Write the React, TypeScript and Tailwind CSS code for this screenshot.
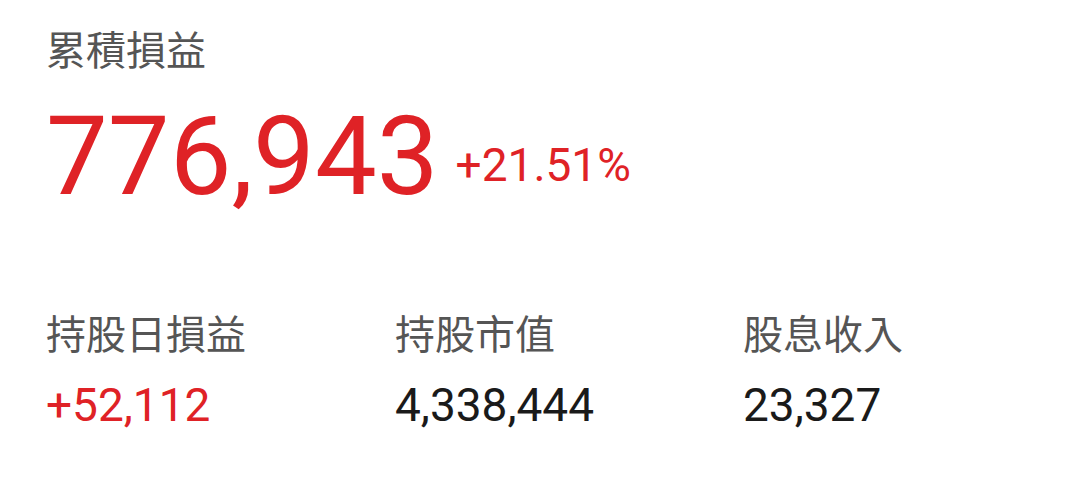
import React from "react";

const cjk = { fontFamily: 'Roboto, "Noto Sans CJK TC", sans-serif' };

export default function App() {
  return (
    <div className="w-[1080px] h-[504px] bg-white pl-[46px] pt-[24px]" style={cjk}>
      <div className="text-[40px] leading-[56px] text-[#555555]">累積損益</div>
      <div className="flex items-end mt-[22px] text-[#df2226]">
        <span className="text-[110px] leading-[110px]">776,943</span>
        <span className="text-[46px] leading-[50px] ml-[17px] mb-[22px]">+21.51%</span>
      </div>
      <div className="grid grid-cols-[349px_348px_1fr] mt-[96px]">
        <div className="flex flex-col">
          <span className="text-[40px] leading-[56px] text-[#555555]">持股日損益</span>
          <span className="text-[46px] leading-[56px] mt-[13px] text-[#df2226]">+52,112</span>
        </div>
        <div className="flex flex-col">
          <span className="text-[40px] leading-[56px] text-[#555555]">持股市值</span>
          <span className="text-[46px] leading-[56px] mt-[13px] text-[#1a1a1a]">4,338,444</span>
        </div>
        <div className="flex flex-col">
          <span className="text-[40px] leading-[56px] text-[#555555]">股息收入</span>
          <span className="text-[46px] leading-[56px] mt-[13px] text-[#1a1a1a]">23,327</span>
        </div>
      </div>
    </div>
  );
}
